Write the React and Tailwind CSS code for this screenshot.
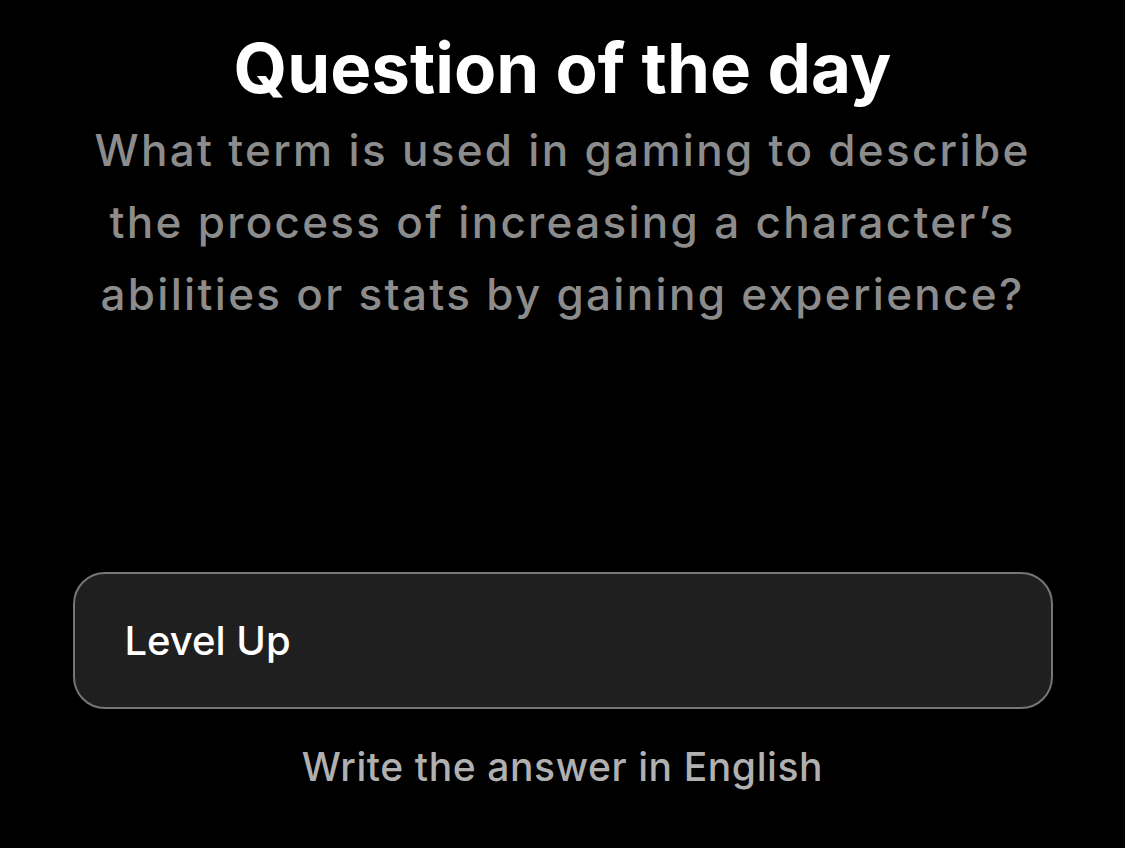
import React from 'react'

const App = () => {
  return (
    <div className="w-[1125px] h-[848px] bg-black flex flex-col items-center overflow-hidden" style={{ fontFamily: 'Inter, "Liberation Sans", sans-serif' }}>
      {/* Heading */}
      <h1 className="mt-[26px] text-[69px] leading-[84px] font-bold text-white">
        Question of the day
      </h1>

      {/* Question */}
      <p className="mt-[4px] w-[950px] text-center text-[44px] leading-[72px] font-medium text-[#8c8c8c] tracking-[2.3px]">
        What term is used in gaming to describe the process of increasing a character’s abilities or stats by gaining experience?
      </p>

      {/* Answer input */}
      <div className="mt-[242px] w-[980px] h-[137px] rounded-[32px] border-[2.5px] border-[#767676] bg-[#1f1f1f] flex items-center px-[50px]">
        <span className="text-[40px] font-medium text-white">Level Up</span>
      </div>

      {/* Hint */}
      <p className="mt-[34px] text-[39px] leading-[48px] font-medium text-[#b0b0b0] tracking-[0.6px]">
        Write the answer in English
      </p>
    </div>
  )
}

export default App
